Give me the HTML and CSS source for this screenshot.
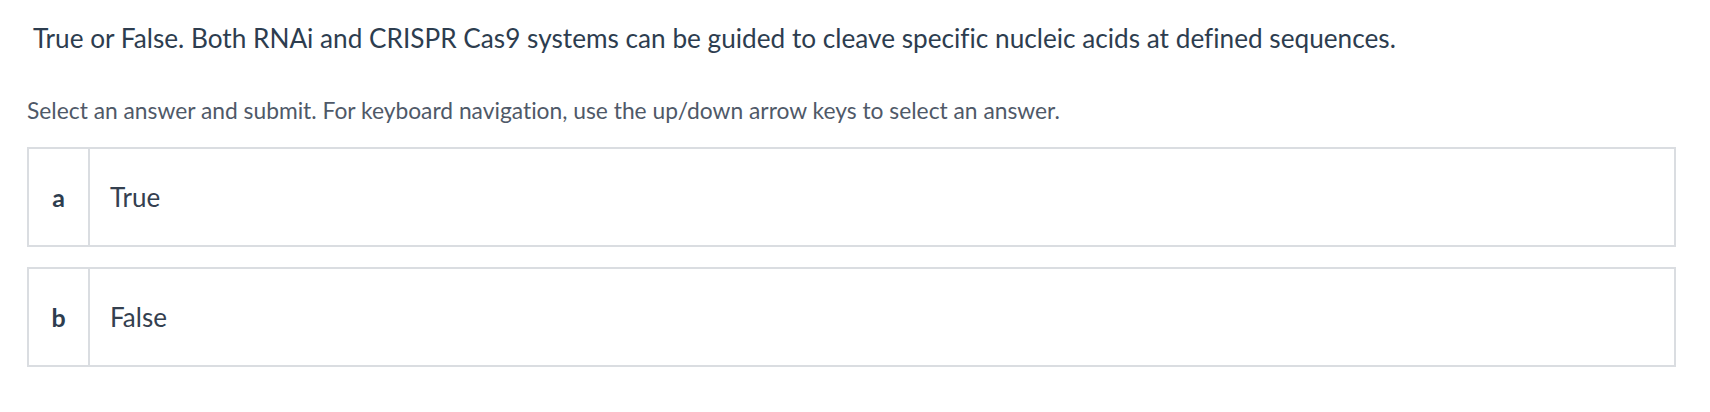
FILE: index.html
```html
<!DOCTYPE html>
<html lang="en">
<head>
<meta charset="utf-8">
<title>Question</title>
<link rel="stylesheet" href="styles.css">
</head>
<body>
<main class="page">
  <h1 class="question">True or False. Both RNAi and CRISPR Cas9 systems can be guided to cleave specific nucleic acids at defined sequences.</h1>
  <p class="instructions">Select an answer and submit. For keyboard navigation, use the up/down arrow keys to select an answer.</p>
  <div class="options" role="radiogroup">
    <div class="option" role="radio" aria-checked="false">
      <span class="letter">a</span>
      <span class="label">True</span>
    </div>
    <div class="option" role="radio" aria-checked="false">
      <span class="letter">b</span>
      <span class="label">False</span>
    </div>
  </div>
</main>
</body>
</html>
```
FILE: styles.css
```css
html, body {
  margin: 0;
  padding: 0;
  background: #ffffff;
}

.page {
  font-family: Lato, "Noto Sans", sans-serif;
  font-variant-ligatures: none;
  padding: 21px 34px 0 27px;
}

.question {
  margin: 0;
  padding-left: 6px;
  font-size: 26.2px;
  line-height: 34px;
  font-weight: 400;
  color: #2d3d4f;
}

.instructions {
  margin: 40px 0 0 0;
  font-size: 22.8px;
  line-height: 30px;
  color: #4f5968;
}

.options {
  margin-top: 22px;
  display: flex;
  flex-direction: column;
  gap: 20px;
}

.option {
  display: flex;
  align-items: stretch;
  height: 100px;
  box-sizing: border-box;
  border: 2px solid #dadde1;
  background: #ffffff;
}

.letter {
  width: 59px;
  flex: 0 0 59px;
  border-right: 2px solid #dadde1;
  display: flex;
  align-items: center;
  justify-content: center;
  font-size: 25px;
  font-weight: 700;
  color: #2d3d4f;
}

.label {
  display: flex;
  align-items: center;
  padding-left: 20px;
  font-size: 26px;
  color: #34404f;
}
```
